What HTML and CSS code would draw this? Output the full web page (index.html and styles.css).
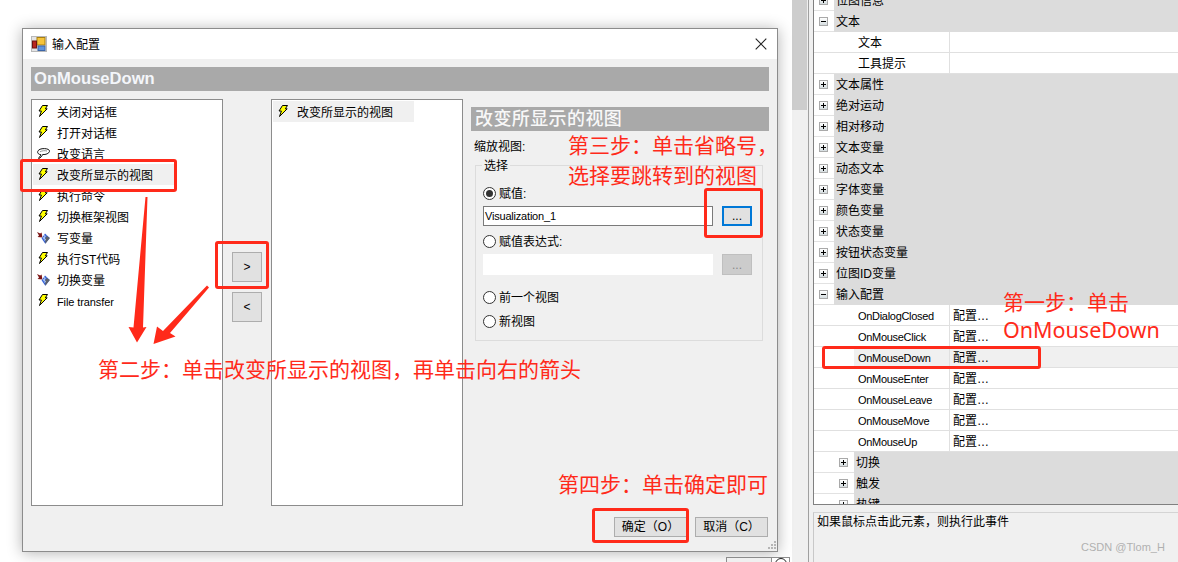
FILE: index.html
```html
<!DOCTYPE html>
<html lang="zh-CN">
<head>
<meta charset="utf-8">
<title>输入配置</title>
<link rel="stylesheet" href="styles.css">
</head>
<body>
<svg class="defs" width="0" height="0">
  <symbol id="bolt" viewBox="0 0 10 12"><path d="M4.5.5H9.5L7.3 3.8H9.2L1.5 11.5 3.4 6H1Z" fill="#ffff00" stroke="#000" stroke-width="1"/></symbol>
  <symbol id="bubble" viewBox="0 0 13 12"><path d="M4 6.8C1.6 6.4.3 5.2.7 3.6 1.2 1.5 4.2.5 7.4.6 10.4.7 12.8 1.7 12.5 3.4 12.1 5.4 8.8 6.9 5.6 6.5 5 8.2 3.6 9.8 1.6 10.6 1.3 9.8 3.3 8.4 4 6.8Z" fill="#fff" stroke="#111" stroke-width="1"/><path d="M3 3.8C5 2.6 8 2.4 10 3" fill="none" stroke="#777" stroke-width=".8"/></symbol>
  <symbol id="varw" viewBox="0 0 13 12"><path d="M0 0 3.2 1.6 4.6 .4 5.4 5.6 .6 5 2 3.4Z" fill="#7c1616"/><path d="M8 1.5 12.8 6 8.3 11.8 4.6 6.4Z" fill="#3560d4"/><path d="M8.3 11.8 12.8 6 9.6 4 8.3 6.6Z" fill="#5e6268"/><path d="M6 5 9 8M5.8 7.5 9 3.6M7.5 2.8 7.8 9" stroke="#bcd4f8" stroke-width=".7"/></symbol>
</svg>

<main class="desktop">
  <div class="window">
    <header class="titlebar">
      <svg class="appicon" width="16" height="16" viewBox="0 0 16 16"><rect x=".5" y=".5" width="15" height="15" fill="#e4e4e4" stroke="#b8b8b8"/><rect x="6" y="1.5" width="8" height="7.5" fill="#f6c43a" stroke="#a87f10"/><rect x="1.5" y="5" width="4" height="7" fill="#b8261e" stroke="#6e1410"/><rect x="7" y="10" width="7" height="4.5" fill="#5f94dc" stroke="#3c66a8"/></svg>
      <span class="titletext">输入配置</span>
      <svg class="closeicon" width="12" height="12" viewBox="0 0 12 12"><path d="M.7.7 11.3 11.3M11.3.7.7 11.3" stroke="#222" stroke-width="1.1"/></svg>
    </header>
    <div class="dialogbody">
      <div class="banner">OnMouseDown</div>
      <div class="columns">
        <ul class="listbox">
          <li><svg class="ico"><use href="#bolt"/></svg>关闭对话框</li>
          <li><svg class="ico"><use href="#bolt"/></svg>打开对话框</li>
          <li><svg class="ico wide"><use href="#bubble"/></svg>改变语言</li>
          <li class="picked short"><svg class="ico"><use href="#bolt"/></svg>改变所显示的视图</li>
          <li><svg class="ico"><use href="#bolt"/></svg>执行命令</li>
          <li><svg class="ico"><use href="#bolt"/></svg>切换框架视图</li>
          <li><svg class="ico wide"><use href="#varw"/></svg>写变量</li>
          <li><svg class="ico"><use href="#bolt"/></svg>执行ST代码</li>
          <li><svg class="ico wide"><use href="#varw"/></svg>切换变量</li>
          <li class="small"><svg class="ico"><use href="#bolt"/></svg>File transfer</li>
        </ul>
        <div class="movers">
          <button class="btn square">&gt;</button>
          <button class="btn square">&lt;</button>
        </div>
        <ul class="listbox">
          <li class="picked short"><svg class="ico"><use href="#bolt"/></svg>改变所显示的视图</li>
        </ul>
        <section class="panel">
          <h2 class="panelhead">改变所显示的视图</h2>
          <div class="zoomlabel">缩放视图:</div>
          <fieldset class="group">
            <legend>选择</legend>
            <div class="radio on first"><i></i>赋值:</div>
            <div class="inputrow">
              <div class="field">Visualization_1</div>
              <button class="btn dots focus">...</button>
            </div>
            <div class="radio"><i></i>赋值表达式:</div>
            <div class="inputrow">
              <div class="field tall"></div>
              <button class="btn dots off tall">...</button>
            </div>
            <div class="radio gap"><i></i>前一个视图</div>
            <div class="radio next"><i></i>新视图</div>
          </fieldset>
        </section>
      </div>
      <footer class="actions">
        <button class="btn action">确定（O）</button>
        <button class="btn action">取消（C）</button>
      </footer>
    </div>
    <svg class="grip" width="9" height="9" viewBox="0 0 9 9"><path d="M6 0h2v2H6zM3 3h2v2H3zM6 3h2v2H6zM0 6h2v2H0zM3 6h2v2H3zM6 6h2v2H6z" fill="#b5b5b5"/></svg>
  </div>
  <div class="statusbits"><span class="bit"></span><span class="bit round"></span></div>
</main>

<div class="scrollbar"><div class="thumb"></div></div>

<aside class="props">
  <div class="grid">
    <div class="row cat"><span class="gut"><b class="tw"></b></span><span class="lab">位图信息</span></div>
    <div class="row cat"><span class="gut"><b class="tw minus"></b></span><span class="lab">文本</span></div>
    <div class="row sub"><span class="name cjk">文本</span><span class="val"></span></div>
    <div class="row sub"><span class="name cjk">工具提示</span><span class="val"></span></div>
    <div class="row cat"><span class="gut"><b class="tw"></b></span><span class="lab">文本属性</span></div>
    <div class="row cat"><span class="gut"><b class="tw"></b></span><span class="lab">绝对运动</span></div>
    <div class="row cat"><span class="gut"><b class="tw"></b></span><span class="lab">相对移动</span></div>
    <div class="row cat"><span class="gut"><b class="tw"></b></span><span class="lab">文本变量</span></div>
    <div class="row cat"><span class="gut"><b class="tw"></b></span><span class="lab">动态文本</span></div>
    <div class="row cat"><span class="gut"><b class="tw"></b></span><span class="lab">字体变量</span></div>
    <div class="row cat"><span class="gut"><b class="tw"></b></span><span class="lab">颜色变量</span></div>
    <div class="row cat"><span class="gut"><b class="tw"></b></span><span class="lab">状态变量</span></div>
    <div class="row cat"><span class="gut"><b class="tw"></b></span><span class="lab">按钮状态变量</span></div>
    <div class="row cat"><span class="gut"><b class="tw"></b></span><span class="lab">位图ID变量</span></div>
    <div class="row cat"><span class="gut"><b class="tw minus"></b></span><span class="lab">输入配置</span></div>
    <div class="row sub"><span class="name">OnDialogClosed</span><span class="val">配置…</span></div>
    <div class="row sub"><span class="name">OnMouseClick</span><span class="val">配置…</span></div>
    <div class="row sub sel"><span class="name">OnMouseDown</span><span class="val">配置…</span></div>
    <div class="row sub"><span class="name">OnMouseEnter</span><span class="val">配置…</span></div>
    <div class="row sub"><span class="name">OnMouseLeave</span><span class="val">配置…</span></div>
    <div class="row sub"><span class="name">OnMouseMove</span><span class="val">配置…</span></div>
    <div class="row sub"><span class="name">OnMouseUp</span><span class="val">配置…</span></div>
    <div class="row cat deep"><span class="gut"><b class="tw"></b></span><span class="lab">切换</span></div>
    <div class="row cat deep"><span class="gut"><b class="tw"></b></span><span class="lab">触发</span></div>
    <div class="row cat deep"><span class="gut"><b class="tw"></b></span><span class="lab">热键</span></div>
  </div>
  <div class="desc">如果鼠标点击此元素，则执行此事件</div>
  <div class="credit">CSDN @Tlom_H</div>
</aside>

<div class="redbox b1"></div>
<div class="redbox b2"></div>
<div class="redbox b3"></div>
<div class="redbox b4"></div>
<div class="redbox b5"></div>
<svg class="arrows" width="240" height="170" viewBox="120 190 240 170">
  <path d="M145.5 197H147.5L143 327.5 146.5 327 137 342.5 128.5 327 133.5 327.5Z" fill="#ff2a1a"/>
  <path d="M207 285.5 209 287.5 170 333 175.5 336.5 153.5 344 157 326.5 163 331Z" fill="#ff2a1a"/>
</svg>
<div class="note n2">第二步：单击改变所显示的视图，再单击向右的箭头</div>
<div class="note n3">第三步：单击省略号，<br>选择要跳转到的视图</div>
<div class="note n1">第一步：单击<br><span class="latin">OnMouseDown</span></div>
<div class="note n4">第四步：单击确定即可</div>
</body>
</html>
```

FILE: styles.css
```css
* { box-sizing: border-box; }
html, body { margin: 0; padding: 0; }
body {
  width: 1178px;
  height: 562px;
  overflow: hidden;
  display: flex;
  position: relative;
  background: #fff;
  color: #000;
  font: 12px/21px "Liberation Sans", "Noto Sans CJK SC", sans-serif;
}
.defs { position: absolute; }
ul { list-style: none; margin: 0; padding: 0; }

.desktop { width: 792px; height: 562px; padding: 28px 0 0 22px; position: relative; flex: none; }
.window {
  width: 756px;
  height: 524px;
  border: 1px solid #8c8c8c;
  background: #f0f0f0;
  box-shadow: 0 1px 14px rgba(0,0,0,.3);
  position: relative;
}
.titlebar { height: 30px; background: #fff; display: flex; align-items: center; padding: 0 10px 0 8px; }
.appicon { flex: none; }
.titletext { margin-left: 5px; flex: 1; padding-top: 2px; }
.dialogbody { padding: 8px 8px 0; }
.banner {
  height: 24px;
  background: #a9a9a9;
  color: #f4f6fa;
  font: bold 16.6px/24px "Liberation Sans", sans-serif;
  padding-left: 3px;
}
.columns { display: flex; margin-top: 8px; height: 407px; }
.listbox { width: 192px; flex: none; background: #fff; border: 1px solid #8c8c8c; padding: 1px; }
.listbox li { height: 21px; display: flex; align-items: flex-start; padding-left: 5px; line-height: 25px; white-space: nowrap; }
.listbox li.picked { background: #f0f0f0; }
.listbox li.short { width: 141px; }
.listbox li.small { font-size: 11px; letter-spacing: -.1px; }
.ico { width: 10px; height: 12px; margin: 4px 9px 0 0; flex: none; }
.ico.wide { width: 13px; margin: 5px 7px 0 -1px; }
.movers { width: 48px; flex: none; padding: 153px 0 0 9px; display: flex; flex-direction: column; gap: 10px; }
.btn {
  background: #e1e1e1;
  border: 1px solid #adadad;
  padding: 0;
  font: 12px/18px "Liberation Sans", "Noto Sans CJK SC", sans-serif;
  color: #000;
  display: block;
}
.square { width: 30px; height: 30px; }
.panel { margin: 8px 0 0 8px; width: 298px; flex: none; }
.panelhead {
  margin: 0;
  height: 24px;
  background: #a9a9a9;
  color: #f8f8f8;
  font: 500 18px/21px "Noto Sans CJK SC", sans-serif;
  padding-left: 4px;
  letter-spacing: .4px;
}
.zoomlabel { margin: 5px 0 0 3px; height: 21px; line-height: 23px; }
.group { margin: -1px 0 0 4px; width: 288px; height: 185px; border: 1px solid #dcdcdc; padding: 0 7px; min-width: 0; }
.group legend { padding: 2px 2px 0; margin-left: -1px; line-height: 17px; }
.radio { display: flex; align-items: flex-start; height: 21px; line-height: 23px; }
.radio i {
  width: 13px; height: 13px; border: 1px solid #333; border-radius: 50%; background: #fff;
  margin: 4px 3px 0 0; flex: none; position: relative;
}
.radio.on i::after { content: ""; position: absolute; inset: 2px; background: #333; border-radius: 50%; }
.radio.first { margin-top: 8px; }
.radio.gap { margin-top: 10px; }
.radio.next { margin-top: 3px; }
.inputrow { display: flex; gap: 9px; height: 25px; align-items: flex-start; padding-top: 2px; margin-bottom: 2px; }
.field { width: 230px; height: 20px; background: #fff; border: 1px solid #7a7a7a; padding-left: 1px; font-size: 11px; letter-spacing: -.2px; line-height: 18px; }
.field.tall { height: 21px; border: 0; }
.dots { width: 30px; height: 20px; line-height: 16px; }
.dots.tall { height: 21px; }
.focus { border: 2px solid #0078d7; }
.off { background: #ccc; border-color: #bfbfbf; color: #888; }
.actions { display: flex; justify-content: flex-end; gap: 8px; margin-top: 11px; padding-right: 1px; }
.action { width: 73px; height: 20px; }
.grip { position: absolute; right: 0; bottom: 1px; }
.closeicon { flex: none; }
.statusbits { position: absolute; left: 726px; top: 557px; display: flex; }
.bit { display: block; width: 46px; height: 8px; background: #f0f0f0; border: 1px solid #8c8c8c; position: relative; overflow: hidden; }
.bit.round { width: 18px; border-left: 0; background: #fff; }
.bit.round::after { content: ""; position: absolute; left: 3px; top: 0; width: 10px; height: 10px; border: 1px solid #222; border-radius: 50%; }

.scrollbar { width: 16px; height: 562px; background: #f0f0f0; flex: none; }
.thumb { width: 15px; height: 110px; background: #cdcdcd; }

.props {
  width: 370px;
  height: 562px;
  flex: none;
  background: #f0f0f0;
  border-left: 1px solid #a0a0a0;
  padding-left: 4px;
  position: relative;
}
.grid { height: 505px; overflow: hidden; border-left: 1px solid #808080; border-bottom: 1px solid #808080; background: #fff; }
.row { display: flex; height: 21px; line-height: 22px; white-space: nowrap; }
.row:first-child { margin-top: -10px; }
.cat { border-bottom: 1px solid #e2e2e2; }
.gut { width: 20px; flex: none; display: flex; align-items: center; padding-left: 5px; background: #fff; }
.deep .gut { width: 40px; padding-left: 25px; }
.lab { flex: 1; background: #dcdcdc; padding-left: 2px; margin-bottom: -1px; }
.tw {
  width: 9px; height: 9px; display: block; position: relative;
  border: 1px solid #a9a9a9;
  background: linear-gradient(#fff, #d5dde0);
}
.tw::before { content: ""; position: absolute; left: 1px; top: 3px; width: 5px; height: 1px; background: #000; }
.tw::after { content: ""; position: absolute; left: 3px; top: 1px; width: 1px; height: 5px; background: #000; }
.tw.minus::after { display: none; }
.sub { border-bottom: 1px solid #e0e0e0; background: #fff; }
.name { width: 136px; flex: none; padding-left: 44px; border-right: 1px solid #e0e0e0; font-size: 11px; letter-spacing: -.3px; }
.name.cjk { font-size: 12px; letter-spacing: 0; }
.val { flex: 1; padding-left: 3px; }
.sel .name { background: linear-gradient(90deg, #fff 40px, #f0f0f0 40px); }
.sel .val { background: #f0f0f0; }
.desc { margin-top: 7px; padding: 0 0 0 3px; line-height: 19px; border-left: 1px solid #c8c8c8; border-top: 1px solid #d4d4d4; height: 50px; }
.credit { position: absolute; left: 272px; top: 540px; font: 11px/14px "Liberation Sans", sans-serif; color: #b0b0b0; }

.redbox { position: absolute; border: 3px solid #ff2a1a; border-radius: 3px; }
.b1 { left: 20px; top: 159px; width: 157px; height: 33px; }
.b2 { left: 215px; top: 241px; width: 54px; height: 48px; }
.b3 { left: 704px; top: 188px; width: 59px; height: 50px; }
.b4 { left: 592px; top: 508px; width: 97px; height: 35px; }
.b5 { left: 822px; top: 346px; width: 219px; height: 23px; }
.arrows { position: absolute; left: 120px; top: 190px; }
.note { position: absolute; color: #ff2a1a; font: 21px/30px "Noto Sans CJK SC", sans-serif; white-space: nowrap; }
.n1 { left: 1003px; top: 287px; line-height: 28px; }
.n2 { left: 98px; top: 353px; }
.n3 { left: 568px; top: 129px; }
.n4 { left: 558px; top: 468px; }
.latin { font-family: "Noto Sans", sans-serif; font-size: 21.5px; }
```
